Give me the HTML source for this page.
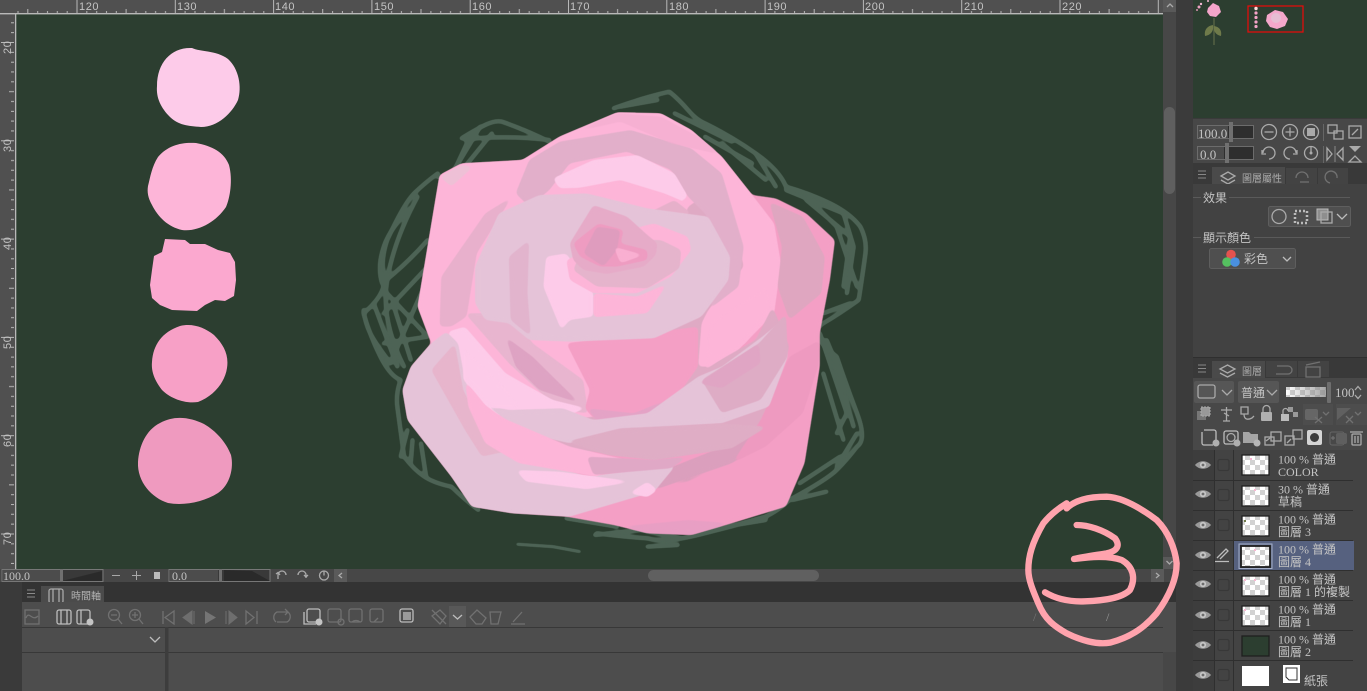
<!DOCTYPE html>
<html><head><meta charset="utf-8"><style>
html,body{margin:0;padding:0;background:#3b3b3b;overflow:hidden}
svg{display:block}
text{font-family:"Liberation Serif","Noto Sans CJK TC",serif;fill:#c4c4c4;font-size:12px}
.s{font-family:"Liberation Sans","Noto Sans CJK TC",sans-serif}
.ic{fill:none;stroke:#aaa;stroke-width:1.3}
.dm{fill:none;stroke:#717171;stroke-width:1.3}
.br{fill:none;stroke:#bdbdbd;stroke-width:1.3}
.r path{filter:url(#g)}
</style></head><body>
<svg width="1367" height="691" viewBox="0 0 1367 691" xmlns="http://www.w3.org/2000/svg">
<defs>
<filter id="g" filterUnits="userSpaceOnUse" x="0" y="0" width="1568" height="1440" color-interpolation-filters="sRGB">
<feGaussianBlur stdDeviation="7"/>
<feComponentTransfer><feFuncA type="linear" slope="5" intercept="-2"/></feComponentTransfer>
</filter>
<filter id="k" filterUnits="userSpaceOnUse" x="0" y="0" width="1568" height="1440" color-interpolation-filters="sRGB">
<feGaussianBlur stdDeviation="4"/>
<feComponentTransfer><feFuncA type="linear" slope="4" intercept="-1.4"/></feComponentTransfer>
</filter>
<pattern id="rt" patternUnits="userSpaceOnUse" x="76.5" y="0" width="98.3" height="14">
<path d="M.5 0V14M10.3 11V14M20.2 11V14M30 11V14M39.8 11V14M49.6 9V14M59.5 11V14M69.3 11V14M79.1 11V14M89 11V14" stroke="#b8b8b8" fill="none"/>
</pattern>
<pattern id="rl" patternUnits="userSpaceOnUse" x="0" y="42" width="14" height="98.3">
<path d="M1 .5H14M11 10.3H14M11 20.2H14M11 30H14M11 39.8H14M9 49.6H14M11 59.5H14M11 69.3H14M11 79.1H14M11 89H14" stroke="#b8b8b8" fill="none"/>
</pattern>
<pattern id="ck" patternUnits="userSpaceOnUse" width="10" height="10">
<rect width="10" height="10" fill="#fff"/><rect width="5" height="5" fill="#d2d2d2"/><rect x="5" y="5" width="5" height="5" fill="#d2d2d2"/>
</pattern>
<linearGradient id="op" x1="0" x2="1" y1="0" y2="0"><stop offset="0" stop-color="#888" stop-opacity="0"/><stop offset="1" stop-color="#888" stop-opacity=".75"/></linearGradient>
<symbol id="eye" viewBox="0 0 16 10" overflow="visible"><path d="M0 5C4 0 12 0 16 5C12 10 4 10 0 5Z" fill="#9a9a9a"/><circle cx="8" cy="5" r="3.1" fill="#c6c6c6"/><circle cx="8" cy="5" r="1.4" fill="#6d6d6d"/></symbol>
</defs>

<!-- base -->
<rect width="1367" height="691" fill="#3b3b3b"/>
<rect x="16" y="14" width="1147" height="555" fill="#2c3e30"/>
<!-- rulers -->
<rect width="1163" height="14" fill="#505050"/>
<rect y="14" width="16" height="555" fill="#505050"/>
<rect x="16" width="1147" height="14" fill="url(#rt)"/>
<rect y="14" width="15" height="555" fill="url(#rl)"/>
<rect x="0" y="13" width="1163" height="1.4" fill="#b8b8b8"/>
<rect x="15" y="13" width="1.3" height="556" fill="#b8b8b8"/>
<g class="s" style="letter-spacing:.6px">
<text class="s" x="79" y="10" style="font-size:11px">120</text>
<text class="s" x="177" y="10" style="font-size:11px">130</text>
<text class="s" x="275" y="10" style="font-size:11px">140</text>
<text class="s" x="374" y="10" style="font-size:11px">150</text>
<text class="s" x="472" y="10" style="font-size:11px">160</text>
<text class="s" x="570" y="10" style="font-size:11px">170</text>
<text class="s" x="669" y="10" style="font-size:11px">180</text>
<text class="s" x="767" y="10" style="font-size:11px">190</text>
<text class="s" x="865" y="10" style="font-size:11px">200</text>
<text class="s" x="964" y="10" style="font-size:11px">210</text>
<text class="s" x="1062" y="10" style="font-size:11px">220</text>
<text class="s" transform="translate(11,54) rotate(-90)" style="font-size:11px">20</text>
<text class="s" transform="translate(11,152) rotate(-90)" style="font-size:11px">30</text>
<text class="s" transform="translate(11,250) rotate(-90)" style="font-size:11px">40</text>
<text class="s" transform="translate(11,349) rotate(-90)" style="font-size:11px">50</text>
<text class="s" transform="translate(11,447) rotate(-90)" style="font-size:11px">60</text>
<text class="s" transform="translate(11,545) rotate(-90)" style="font-size:11px">70</text>
</g>

<!-- swatches -->
<path d="M157 86C157 62 172 47 192 48C200 52 216 50 228 59C239 69 242 87 238 100C232 113 218 127 201 127C188 126 178 125 170 117C161 108 156 98 157 86Z" fill="#fdcbe9"/>
<path d="M148 186C150 178 152 166 158 157C168 145 182 142 196 143C212 146 224 152 229 165C233 180 230 198 226 207C216 222 198 232 182 230C168 227 158 217 152 205C148 198 147 192 148 186Z" fill="#fdb5d8"/>
<path d="M165 239L185 240L190 244L205 244L218 250L230 253L235 262L236 280L234 296L225 301L215 300L205 305L197 311L172 310L160 305L152 298L150 285L152 270L154 256L162 252Z" fill="#fba8cf"/>
<path d="M152 362C153 345 162 332 180 326C192 323 204 327 214 335C224 345 229 355 227 368C225 382 214 396 198 402C184 404 170 398 162 390C155 381 151 372 152 362Z" fill="#f7a0c6"/>
<path d="M138 462C139 446 146 430 160 423C174 415 190 417 204 424C216 431 226 442 231 455C234 468 230 485 218 493C204 502 184 506 168 503C152 498 137 482 138 462Z" fill="#ef9abf"/>

<!-- rose -->
<g transform="translate(350,80) scale(.338,.3333)" stroke-linejoin="round" stroke-linecap="round">
<g fill="none" stroke="#4d6355" stroke-width="13" filter="url(#k)">
<path d="M330 175Q370 150 400 135T450 125Q520 150 590 185M340 178Q460 165 590 180M385 140Q350 200 320 250T260 290M420 160L340 260M360 160L300 290"/>
<path d="M780 85Q860 55 945 35Q975 60 1000 90T1050 130Q1130 170 1200 220T1290 320Q1360 340 1420 370T1510 440Q1530 480 1525 520T1505 660Q1450 700 1400 730T1440 830Q1470 920 1500 1000T1500 1100Q1470 1140 1440 1170T1300 1260Q1270 1290 1230 1310Q1130 1340 1030 1365T880 1375Q800 1370 730 1360"/>
<path d="M800 80L910 60M960 100L1130 185M1100 190L1230 300M1050 170L1190 250M1200 220L1260 320M1290 330L1460 400L1490 500L1470 640M1380 380L1440 440L1500 620M1350 360L1480 470L1460 620M1400 700L1480 670M1390 760L1470 1000L1440 1060M1430 830L1490 1040M1410 780L1480 950M1500 1060L1440 1160M1310 1260L1410 1235M1330 1210L1450 1130M1400 880L1460 1080"/>
<path d="M260 280Q220 310 190 340T110 480Q90 540 100 590T40 700Q60 770 90 830T150 900Q135 940 140 980T160 1130Q190 1170 220 1190T300 1220Q340 1260 380 1290"/>
<path d="M185 380Q120 440 100 500T95 610Q170 550 230 480M40 690Q45 730 60 760T120 850Q170 730 220 620M100 630L230 770L100 790M200 350Q130 480 110 600T160 860M70 670L140 860M170 1050L150 1130M185 1080L180 1145M210 1090L225 1190M130 680L180 840M230 560L100 700"/>
<path d="M725 1365L860 1350L980 1375M880 1400L970 1395M640 1315L790 1340M1020 1355L1230 1320"/>
<path d="M495 1393L600 1400L680 1415" stroke-width="9"/>
</g>
<g class="r">
<!-- silhouette -->
<path d="M265 285L330 250L510 240L620 170L790 97L920 100L1010 150L1100 230L1190 345L1260 355L1350 400L1435 480L1420 600L1390 760L1390 860L1345 1150L1290 1280L1130 1330L1010 1365L880 1360L780 1335L640 1310L480 1300L360 1280L300 1190L170 1020L155 930L180 860L240 790L200 680Z" fill="#f49fc5"/>
<path d="M265 285L330 250L510 240L620 170L790 97L920 100L1010 150L1100 230L1190 345L1255 430L1275 550L1255 700L1100 860L1000 920L800 1100L500 1150L300 1000L240 785L200 680Z" fill="#fdb5d8"/>
<!-- right overlay -->
<path d="M1240 365L1340 410L1405 530L1395 640L1300 720L1265 620L1278 500Z" fill="#dfa6c0"/>
<path d="M1000 380L1060 340L1130 410L1165 560L1060 690L1040 730L1030 860L1060 860L1200 780L1250 680L1300 800L1230 1040L1100 1110L900 1140L600 1100L480 1040L800 1000Z" fill="#dfaac4"/>
<path d="M1060 730L1230 620L1250 680L1170 790L1050 870Z" fill="#fdb5d8"/>
<path d="M1130 1090L1230 1040L1220 1090L1130 1150L900 1230L930 1170Z" fill="#db9fbd"/>
<path d="M1300 830L1390 780L1385 860L1340 1000L1230 1100L1130 1150L1215 1020Z" fill="#ee9ac0"/>
<!-- mauve ring top -->
<path d="M490 340L530 240L620 185L830 150L1010 205L1100 280L1165 500L1150 620L1060 690L1125 530L1050 400L1000 350L950 270L820 215L650 250L590 330L530 380Z" fill="#e2afca"/>
<path d="M650 160L800 125L950 190L1100 225L1030 170L920 110L790 100Z" fill="#f4aed0" opacity=".7"/>
<path d="M600 295L720 240L850 225L960 280L1000 350L930 400L800 320L620 325Z" fill="#fdcbe9"/>
<path d="M620 335L800 300L930 340L1000 370L900 440L760 355Z" fill="#fdb5d8"/>
<path d="M880 400L960 360L1010 400L900 440Z" fill="#e6b0ca"/>
<!-- left overlay -->
<path d="M265 290L330 255L365 260L300 320Z" fill="#eec0d6"/>
<path d="M270 590L400 400L480 350L375 520L345 710L300 740L265 740Z" fill="#e8b0cc"/>
<!-- lower-left mauve -->
<path d="M340 700L480 700L540 790L690 900L705 1000L620 990L470 850Z" fill="#e8b5cf"/>
<path d="M460 770L540 830L680 970L560 930L490 860Z" fill="#dea3c3"/>
<!-- lower inner -->
<path d="M290 755L340 740L460 880L600 960L700 985L620 1015L440 1005L340 930Z" fill="#fdcbe9"/>
<path d="M640 790L1030 740L1030 860L960 960L850 1010L720 1015L695 985L710 930Z" fill="#f49fc5"/>
<path d="M700 985L840 1000L960 950L860 1020L730 1022Z" fill="#e4a3c6"/>
<!-- pale ring -->
<path d="M370 670L370 560L440 400L560 345L700 340L880 385L1060 410L1125 530L1120 600L1040 710L900 775L650 785L530 780L470 730L400 720Z" fill="#e5c3d8"/>
<path d="M470 530L530 480L525 640L535 770L475 720Z" fill="#e2b4cd"/>
<path d="M580 530L640 520L720 640L720 710L650 720L625 750L572 620Z" fill="#fdcbe9"/>
<path d="M650 600L720 640L850 640L950 590L1010 510L1000 470L900 430L860 440L640 540Z" fill="#fdb5d8"/>
<path d="M720 640L850 650L940 610L880 700L720 712Z" fill="#fdb5d8"/>
<path d="M660 570L730 620L880 625L975 565L980 510L920 480L700 480Z" fill="#e5b4cc"/>
<path d="M650 490L720 375L820 410L880 465L910 490L905 525L870 560L760 582L690 570L660 540Z" fill="#e6abc8"/>
<path d="M660 490L735 430L810 450L800 490L880 510L880 540L790 560L740 560L680 530Z" fill="#ee9cc1"/>
<path d="M730 440L800 450L790 510L750 560L690 520Z" fill="#dc9cbe" opacity=".8"/>
<path d="M780 500L870 525L800 550Z" fill="#f9afd1"/>
<!-- lower pale sweep -->
<path d="M400 975L470 990L630 985L720 1020L880 1000L1030 890L1100 860L1220 770L1280 720L1295 830L1240 980L1100 1030L800 1050L650 1090L520 1060Z" fill="#e5c3d8"/>
<path d="M640 1085L800 1045L1100 1030L1235 1040L1130 1105L900 1140L760 1125Z" fill="#dfadc5"/>
<path d="M1040 900L1210 790L1290 700L1295 830L1215 960L1100 1000Z" fill="#deacc5"/>
<path d="M1030 910L1100 925L1215 850L1210 790Z" fill="#e0a5c4"/>
<!-- big left petal -->
<path d="M155 930L180 860L240 790L285 755L320 790L340 900L400 1040L500 1120L700 1190L965 1155L900 1235L650 1310L480 1300L360 1280L300 1190L170 1020Z" fill="#e5c3d8"/>
<path d="M240 870L310 790L335 930L400 1060L480 1110L390 1130L340 1050Z" fill="#e7b5cc"/>
<path d="M340 900L420 1000L650 1100L820 1140L730 1190L500 1150L400 1090L350 980Z" fill="#fdb5d8"/>
<path d="M335 800L460 920L510 985L420 985L335 900Z" fill="#fdcbe9"/>
<path d="M490 1170L620 1175L840 1205L700 1228L520 1205Z" fill="#fdcbe9"/>
<path d="M825 1240L880 1205L910 1230L880 1252Z" fill="#fdcbe9"/>
<path d="M700 1130L900 1140L1000 1130L950 1165L720 1185Z" fill="#e0a8c6"/>
<path d="M910 1225L1130 1145L1000 1205Z" fill="#da9fbc"/>
<path d="M800 1340L1000 1320L1130 1330L1010 1365L880 1360Z" fill="#e49fc4" opacity=".7"/>
</g>
</g>

<!-- scrollbars -->
<rect x="1163" width="13" height="569" fill="#474747"/>
<rect x="1164" y="107" width="11" height="87" rx="5.5" fill="#5f5f5f"/>
<rect x="1163" y="0" width="13" height="12" fill="#595959"/>
<path d="M1167 7L1170 4L1173 7" class="ic"/>
<rect x="1163" y="557" width="13" height="12" fill="#595959"/>
<path d="M1166.500 561L1169.500 564L1172.500 561" class="ic"/>
<rect x="0" y="569" width="1176" height="13" fill="#474747"/>
<rect x="648" y="570" width="171" height="11" rx="5.500" fill="#606060"/>
<rect x="334" y="569" width="13" height="13" fill="#5a5a5a"/>
<path d="M342 573L339 575.500L342 578" class="ic"/>
<rect x="1151" y="569" width="13" height="13" fill="#5a5a5a"/>
<path d="M1156 573L1159 575.500L1156 578" class="ic"/>
<!-- zoom sliders -->
<rect x="2" y="569.500" width="101" height="12" fill="#393939" stroke="#777"/>
<path d="M62 581L102 581L102 571Z" fill="#2a2a2a"/>
<rect x="3" y="570" width="58" height="11" fill="#4c4c4c"/>
<rect x="60" y="569" width="3" height="13" fill="#707070"/>
<text x="3" y="580" style="font-size:12px">100.0</text>
<path d="M112 575.500H120M132 575.500H141M136.500 571V580" stroke="#a8a8a8" fill="none"/>
<rect x="154" y="572" width="6" height="7" fill="#bbb"/>
<rect x="169" y="569.500" width="101" height="12" fill="#393939" stroke="#777"/>
<path d="M224 581L270 581L252 571L224 570Z" fill="#2a2a2a"/>
<rect x="170" y="570" width="48" height="11" fill="#4c4c4c"/>
<rect x="219" y="569" width="3" height="13" fill="#707070"/>
<text x="172" y="580" style="font-size:12px">0.0</text>
<path d="M278 579L278 575A4 4 0 0 1 286 575M276 574L278 572.500L280 575" class="ic"/>
<path d="M298 575A4 4 0 0 1 306 575L306 578M304 575L306 577L308 575" class="ic"/>
<circle cx="324" cy="575.500" r="4.500" class="ic"/><path d="M324 575.500V571" class="ic"/>

<!-- timeline -->
<rect x="0" y="582" width="1176" height="109" fill="#3a3a3a"/>
<rect x="22" y="582" width="1154" height="20" fill="#333"/>
<rect x="41" y="586" width="63" height="16" fill="#4b4b4b"/>
<path d="M27 590H35M27 593.500H35M27 597H35" stroke="#8a8a8a" fill="none"/>
<rect x="49" y="589" width="14" height="14" rx="2" class="ic"/><path d="M53 589V603M59 589V603" class="ic"/>
<text class="s" x="71" y="599.500" style="font-size:10px;fill:#b5b5b5">時間軸</text>
<rect x="22" y="602" width="1154" height="89" fill="#4d4d4d"/>
<rect x="22" y="627" width="1141" height="1" fill="#383838"/>
<rect x="22" y="652" width="1141" height="1" fill="#383838"/>
<rect x="165" y="627" width="3.500" height="64" fill="#3d3d3d"/>
<rect x="1163" y="652" width="13" height="39" fill="#474747"/>
<path d="M150 637L155 642L160 637" class="br"/>
<!-- timeline icons -->
<rect x="25" y="610" width="14" height="14" class="dm"/><path d="M26 618C29 610 32 622 38 616" class="dm"/>
<rect x="57" y="610" width="14" height="14" rx="2" class="br"/><path d="M61 610V624M67 610V624" class="br"/>
<rect x="77" y="610" width="13" height="14" rx="2" class="br"/><path d="M81 610V624" class="br"/><circle cx="90" cy="622" r="3.500" fill="#c4c4c4"/>
<circle cx="114" cy="615" r="5.500" class="dm"/><path d="M118 619L122 624M111 615H117" class="dm"/>
<circle cx="135" cy="615" r="5.500" class="dm"/><path d="M139 619L143 624M132 615H138M135 612V618" class="dm"/>
<path d="M163 611V624M174 611V624L165 617.500Z" class="dm"/>
<path d="M192 611V624L183 617.500ZM194 611V624" fill="#6e6e6e" stroke="#6e6e6e"/>
<path d="M205 611V624L216 617.500Z" fill="#757575"/>
<path d="M226 611V624M229 611L237 617.500L229 624Z" fill="#6e6e6e" stroke="#6e6e6e"/>
<path d="M246 611L254 617.500L246 624ZM257 611V624" class="dm"/>
<path d="M276 622A6 6 0 0 1 277 612H288M285 609L288 612L285 615M288 612A6 6 0 0 1 287 622H277" class="dm"/>
<rect x="307" y="609" width="13" height="13" rx="2" class="br"/><path d="M304 612V624H316" class="br"/><circle cx="319" cy="622" r="3.500" fill="#c4c4c4"/>
<rect x="328" y="609" width="13" height="13" rx="2" class="dm"/><circle cx="341" cy="622" r="3" class="dm"/>
<rect x="349" y="609" width="13" height="13" rx="2" class="dm"/><path d="M352 622C354 620 358 620 360 622" class="dm"/>
<rect x="370" y="609" width="13" height="13" rx="2" class="dm"/><path d="M374 622L378 618" class="dm"/>
<rect x="400" y="609" width="13" height="13" rx="2" class="br"/><rect x="403" y="612" width="8" height="8" fill="#9a9a9a"/>
<path d="M432 610L446 624M432 616L440 610L446 616L440 624Z" class="dm"/>
<rect x="449" y="606" width="17" height="21" fill="#585858"/><path d="M453 615L457.500 619L462 615" class="br"/>
<path d="M470 617L477 610L486 618L482 624H476Z" class="dm"/>
<path d="M490 612H501L498 624H491Z" class="dm"/>
<path d="M511 624H525M513 622L522 612" class="dm"/>
<text x="1033" y="621" style="fill:#777;font-size:12px">/</text>
<text x="1106" y="621" style="fill:#999;font-size:12px">/</text>

<!-- right panels -->
<rect x="1176" y="0" width="17" height="691" fill="#3b3b3b"/>
<rect x="1193" y="0" width="174" height="118" fill="#2c3e30"/>
<!-- navigator thumbnail -->
<path d="M1214 45L1214 18" stroke="#5f6a48" stroke-width="1.200" fill="none"/>
<path d="M1213 25C1207 26 1204 30 1205 36C1211 35 1214 31 1213 25ZM1214 26C1220 27 1222 31 1221 36C1216 35 1213 31 1214 26Z" fill="#6f7a4a"/>
<path d="M1208 8L1213 3L1219 6L1221 12L1216 17L1210 16L1207 12Z" fill="#f4a5ca"/>
<circle cx="1199" cy="7" r="1.500" fill="#eba0c0"/><circle cx="1201" cy="4" r="1.200" fill="#f5b8d5"/><circle cx="1197" cy="10" r="1" fill="#d893b0"/><circle cx="1208" cy="1" r="1" fill="#f5b8d5"/>
<rect x="1248" y="6" width="55" height="26" fill="none" stroke="#e00d0d" stroke-width="1.300"/>
<g fill="#f4a3c8"><circle cx="1256" cy="8.500" r="1.700" fill="#fdd"/><circle cx="1256" cy="13" r="1.600"/><circle cx="1256" cy="17.500" r="1.600"/><circle cx="1256" cy="22" r="1.600"/><circle cx="1256" cy="26.500" r="1.600"/></g>
<path d="M1267 15L1275 10L1283 12L1288 19L1285 26L1277 29L1270 27L1266 21Z" fill="#f4a7cb"/>
<circle cx="1276" cy="18" r="5" fill="#e6bdd3"/>
<!-- nav controls -->
<rect x="1193" y="118" width="174" height="45" fill="#474747"/>
<rect x="1193" y="118" width="174" height="1" fill="#3a3a3a"/>
<rect x="1197.500" y="125.500" width="56" height="13" fill="#2e2e2e" stroke="#6c6c6c"/>
<rect x="1198" y="126" width="30" height="12" fill="#4b4b4b"/>
<rect x="1229" y="122" width="4" height="20" fill="#707070"/>
<text x="1198" y="138" style="font-size:13px">100.0</text>
<rect x="1197.500" y="146.500" width="56" height="13" fill="#2e2e2e" stroke="#6c6c6c"/>
<rect x="1198" y="147" width="26" height="12" fill="#4b4b4b"/>
<rect x="1225" y="143" width="4" height="20" fill="#707070"/>
<text x="1200" y="159" style="font-size:13px">0.0</text>
<circle cx="1269" cy="132" r="7.500" class="ic"/><path d="M1264.500 132H1273.500" class="ic"/>
<circle cx="1290" cy="132" r="7.500" class="ic"/><path d="M1285.500 132H1294.500M1290 127.500V136.500" class="ic"/>
<circle cx="1311" cy="132" r="7.500" class="ic"/><rect x="1307" y="128" width="8" height="8" fill="#aaa"/>
<rect x="1323" y="124" width="1" height="17" fill="#666"/><rect x="1323" y="146" width="1" height="17" fill="#666"/>
<rect x="1328" y="125" width="9" height="8" class="ic"/><rect x="1334" y="131" width="9" height="8" class="ic"/>
<rect x="1349" y="126" width="12" height="12" class="ic"/><path d="M1352 135L1358 129" class="ic"/>
<path d="M1263 153A6 6 0 1 1 1269 159M1262 150V154H1266" class="ic"/>
<path d="M1296 153A6 6 0 1 0 1290 159M1297 150V154H1293" class="ic"/>
<circle cx="1311" cy="153" r="6.500" class="ic"/><path d="M1311 153V147" class="ic"/><circle cx="1311" cy="153" r="1.500" fill="#aaa"/>
<path d="M1327 148V160L1332 154ZM1343 148V160L1337 154Z" class="ic"/><path d="M1335 146V162" stroke="#888"/>
<path d="M1349 146H1361L1355 152Z" fill="#aaa"/><path d="M1349 162H1361L1355 156Z" class="ic"/>
<!-- panel tabs -->
<rect x="1193" y="163" width="174" height="22" fill="#393939"/>
<rect x="1212" y="167" width="73" height="17" fill="#4a4a4a"/>
<rect x="1286" y="168" width="31" height="16" fill="#434343"/>
<rect x="1318" y="168" width="30" height="16" fill="#434343"/>
<path d="M1198 171H1206M1198 174.500H1206M1198 178H1206" stroke="#888"/>
<path d="M1221 176L1228 172L1235 176L1228 180ZM1221 180L1228 184L1235 180" class="ic"/>
<text class="s" x="1242" y="182" style="font-size:10px;fill:#aaa">圖層屬性</text>
<path d="M1296 178A6 6 0 0 1 1308 178M1300 182H1309" class="dm"/>
<path d="M1330 183A6 6 0 1 1 1337 178" class="dm"/>
<rect x="1193" y="184" width="174" height="174" fill="#424242"/>
<path d="M1193 197.500H1201M1229 197.500H1350" stroke="#5a5a5a"/>
<text class="s" x="1203" y="202" style="font-size:12px">效果</text>
<rect x="1268.500" y="206.500" width="82" height="20" rx="2" fill="#4f4f4f" stroke="#5e5e5e"/>
<circle cx="1279" cy="216.500" r="7" class="ic"/>
<path d="M1295 211h12v12h-12z" fill="none" stroke="#bbb" stroke-width="2.500" stroke-dasharray="2 2"/>
<rect x="1317" y="209" width="11" height="11" fill="#8e8e8e" stroke="#bbb"/><rect x="1321" y="212" width="11" height="11" class="ic"/>
<path d="M1337 214L1342 219L1347 214" class="br"/>
<path d="M1193 237.500H1201M1254 237.500H1350" stroke="#5a5a5a"/>
<text class="s" x="1203" y="242" style="font-size:12px">顯示顏色</text>
<rect x="1209.500" y="248.500" width="86" height="20" rx="2" fill="#4f4f4f" stroke="#5e5e5e"/>
<circle cx="1231" cy="254.500" r="4.800" fill="#e3524f"/><circle cx="1227" cy="262" r="4.800" fill="#55c060"/><circle cx="1235" cy="262" r="4.800" fill="#4a90df"/>
<text class="s" x="1244" y="263" style="font-size:12px">彩色</text>
<path d="M1283 257L1287 261L1291 257" class="br"/>

<!-- layer panel -->
<rect x="1193" y="358" width="174" height="20" fill="#393939"/>
<rect x="1193" y="357" width="174" height="1" fill="#2f2f2f"/>
<rect x="1212" y="361" width="53" height="17" fill="#4a4a4a"/>
<rect x="1266" y="361" width="31" height="16" fill="#434343"/>
<rect x="1298" y="361" width="31" height="16" fill="#434343"/>
<path d="M1198 365H1206M1198 368.500H1206M1198 372H1206" stroke="#888"/>
<path d="M1220 369L1227.500 365L1235 369L1227.500 373ZM1220 373L1227.500 377L1235 373" class="ic"/>
<text class="s" x="1242" y="375" style="font-size:10px;fill:#aaa">圖層</text>
<path d="M1277 366H1288A4 4 0 0 1 1288 374H1276" class="dm"/>
<rect x="1306" y="367" width="14" height="10" class="dm"/><path d="M1306 365L1320 362" class="dm"/>
<rect x="1193" y="378" width="174" height="72" fill="#484848"/>
<rect x="1194" y="381" width="40" height="22" rx="2" fill="#565656"/>
<rect x="1198" y="385" width="17" height="13" rx="2" class="ic"/>
<path d="M1222 390L1227 395L1232 390" class="ic"/>
<rect x="1238" y="381" width="41" height="22" rx="2" fill="#565656"/>
<text class="s" x="1241" y="397" style="font-size:12px">普通</text>
<path d="M1267 390L1272 395L1277 390" class="ic"/>
<rect x="1286" y="387" width="40" height="10" fill="url(#ck)"/>
<rect x="1286" y="387" width="40" height="10" fill="url(#op)"/>
<rect x="1327" y="382" width="4" height="21" rx="1" fill="#6e6e6e"/>
<text x="1335" y="397" style="font-size:13px">100</text>
<path d="M1355 390L1358 386.500L1361 390M1355 395L1358 398.500L1361 395" class="ic"/>
<!-- row 1 icons -->
<rect x="1197" y="411" width="9" height="9" fill="#777"/><rect x="1201" y="407" width="9" height="9" fill="#999" stroke="#aaa" stroke-dasharray="2 1"/>
<path d="M1221 410H1232M1226.500 407V421M1223 421H1230M1224 413L1229 416" class="ic"/>
<path d="M1241 407H1248V414H1241ZM1244 414C1244 420 1248 420 1252 418L1254 416" class="ic"/>
<rect x="1261" y="412" width="11" height="9" rx="1" fill="#b0b0b0"/><path d="M1263 412V409A3.300 3.300 0 0 1 1270 409V412" class="ic"/>
<rect x="1281" y="414" width="8" height="7" fill="#bbb"/><rect x="1288" y="407" width="5" height="5" fill="#999"/><rect x="1293" y="412" width="5" height="5" fill="#999"/><path d="M1283 414V411A2 2 0 0 1 1288 411" class="ic"/>
<rect x="1303" y="404" width="30" height="21" fill="#4d4d4d"/>
<rect x="1305" y="409" width="13" height="11" rx="2" fill="#666"/><path d="M1315 417L1322 423M1322 417L1315 423M1323 412L1326 415L1329 412" class="dm"/>
<rect x="1336" y="404" width="31" height="21" fill="#4d4d4d"/>
<path d="M1337 408H1351L1337 420Z" fill="#606060"/><path d="M1346 416L1353 423M1353 416L1346 423M1355 412L1358 415L1361 412" class="dm"/>
<!-- row 2 icons -->
<path d="M1204 430H1214A2 2 0 0 1 1216 432V441M1213 445H1204A2 2 0 0 1 1202 443V432" class="br"/><circle cx="1216" cy="443" r="3.500" fill="#b0b0b0"/>
<rect x="1224" y="431" width="14" height="13" rx="2" class="br"/><circle cx="1231" cy="437.500" r="4" class="ic"/><circle cx="1237" cy="443" r="3.500" fill="#b0b0b0"/>
<path d="M1243 432H1249L1251 434H1258V443H1243Z" fill="#a5a5a5"/><circle cx="1257" cy="443" r="3.500" fill="#b8b8b8"/>
<rect x="1271" y="432" width="10" height="9" class="ic"/><rect x="1265" y="437" width="9" height="8" class="ic"/><path d="M1266 441L1270 438" class="ic"/>
<rect x="1293" y="430" width="9" height="9" class="ic"/><rect x="1285" y="436" width="9" height="9" class="ic"/><path d="M1287 443L1291 439" class="ic"/>
<rect x="1307" y="430" width="15" height="15" rx="2" fill="#d5d5d5"/><circle cx="1314.500" cy="437.500" r="4.500" fill="#3c3c3c"/>
<rect x="1330" y="432" width="14" height="13" rx="2" fill="none" stroke="#666"/><rect x="1336" y="433" width="11" height="11" rx="2" fill="#5f5f5f"/><path d="M1331 438H1335M1333 436V440" stroke="#777"/>
<rect x="1352" y="434" width="9" height="11" rx="1" class="ic"/><path d="M1350 432H1363M1355 436V443M1358 436V443" class="ic"/>

<!-- layer list -->
<rect x="1193" y="450" width="174" height="241" fill="#434343"/>
<rect x="1193" y="450" width="21" height="241" fill="#3d3d3d"/>
<rect x="1214" y="450" width="1" height="241" fill="#2f2f2f"/>
<rect x="1233" y="450" width="1" height="241" fill="#2f2f2f"/>
<rect x="1234" y="541" width="120" height="29" fill="#56617f"/>
<g fill="#2f2f2f"><rect x="1193" y="480" width="160" height="1"/><rect x="1193" y="510" width="160" height="1"/><rect x="1193" y="540" width="160" height="1"/><rect x="1193" y="570" width="160" height="1"/><rect x="1193" y="600" width="160" height="1"/><rect x="1193" y="630" width="160" height="1"/><rect x="1193" y="660" width="160" height="1"/></g>
<use href="#eye" x="1195" y="460" width="16" height="10"/><use href="#eye" x="1195" y="489" width="16" height="10"/><use href="#eye" x="1195" y="520" width="16" height="10"/><use href="#eye" x="1195" y="550" width="16" height="10"/><use href="#eye" x="1195" y="579" width="16" height="10"/><use href="#eye" x="1195" y="610" width="16" height="10"/><use href="#eye" x="1195" y="640" width="16" height="10"/><use href="#eye" x="1195" y="670" width="16" height="10"/>
<g fill="none" stroke="#383838" stroke-width="1.300"><rect x="1218" y="459.500" width="11" height="11" rx="2"/><rect x="1218" y="489.500" width="11" height="11" rx="2"/><rect x="1218" y="519.500" width="11" height="11" rx="2"/><rect x="1218" y="579.500" width="11" height="11" rx="2"/><rect x="1218" y="609.500" width="11" height="11" rx="2"/><rect x="1218" y="639.500" width="11" height="11" rx="2"/><rect x="1218" y="669.500" width="11" height="11" rx="2"/></g>
<path d="M1217 558L1226 549L1228 551L1220 559M1215 561.500H1229" stroke="#bdbdbd" fill="none" stroke-width="1.300"/>
<g stroke="#1f1f1f" stroke-width="1.300">
<rect x="1242" y="455" width="27" height="20" fill="url(#ck)"/>
<rect x="1242" y="486" width="27" height="20" fill="url(#ck)"/>
<rect x="1242" y="516" width="27" height="20" fill="url(#ck)"/>
<rect x="1241" y="546" width="29" height="21" fill="url(#ck)" stroke-width="1.800"/>
<rect x="1242" y="576" width="27" height="20" fill="url(#ck)"/>
<rect x="1242" y="606" width="27" height="20" fill="url(#ck)"/>
<rect x="1242" y="636" width="27" height="20" fill="#2c3e30"/>
</g>
<rect x="1239" y="544" width="33" height="24.500" fill="none" stroke="#a4aec8" stroke-width="1"/>
<rect x="1242" y="666" width="27" height="20" fill="#fff"/>
<g fill="#f8b6d3"><rect x="1250" y="458" width="2" height="2"/><rect x="1254" y="489" width="2" height="2"/><rect x="1254" y="549" width="2" height="2"/><rect x="1244" y="579" width="2" height="2"/><rect x="1254" y="579" width="2" height="2"/><rect x="1244" y="609" width="2" height="2"/></g>
<rect x="1244" y="520" width="2" height="2" fill="#6f7a4a"/>
<rect x="1283" y="665" width="17" height="18" fill="#fff"/><path d="M1286 668H1297V680H1289L1286 677Z" fill="#fff" stroke="#333"/>
<g style="font-size:12px">
<text x="1278" y="463.500">100 % 普通</text><text x="1278" y="476">COLOR</text>
<text x="1278" y="493.500">30 % 普通</text><text x="1278" y="506">草稿</text>
<text x="1278" y="523.500">100 % 普通</text><text x="1278" y="536">圖層 3</text>
<text x="1278" y="553.500">100 % 普通</text><text x="1278" y="566">圖層 4</text>
<text x="1278" y="583.500">100 % 普通</text><text x="1278" y="596">圖層 1 的複製</text>
<text x="1278" y="613.500">100 % 普通</text><text x="1278" y="626">圖層 1</text>
<text x="1278" y="643.500">100 % 普通</text><text x="1278" y="656">圖層 2</text>
<text x="1304" y="685">紙張</text>
</g>

<!-- annotation -->
<g transform="translate(1000,480) scale(.3333)" fill="none" stroke="#ffa3ad" stroke-width="19" stroke-linecap="round" stroke-linejoin="round">
<path d="M200 85C225 60 270 50 320 50C370 52 430 90 470 120C505 155 525 205 530 250C530 295 510 345 470 400C440 435 400 470 330 488C290 495 240 480 200 460C165 440 135 420 115 370C100 335 85 300 85 270C85 230 95 190 130 130C150 105 175 85 200 70"/>
<path d="M230 135C265 135 310 150 345 175C360 195 355 212 320 220C290 225 250 230 222 237C265 232 320 225 365 240C400 260 408 295 390 330C365 355 310 362 255 364C205 366 165 355 135 337"/>
</g>
</svg>
</body></html>
